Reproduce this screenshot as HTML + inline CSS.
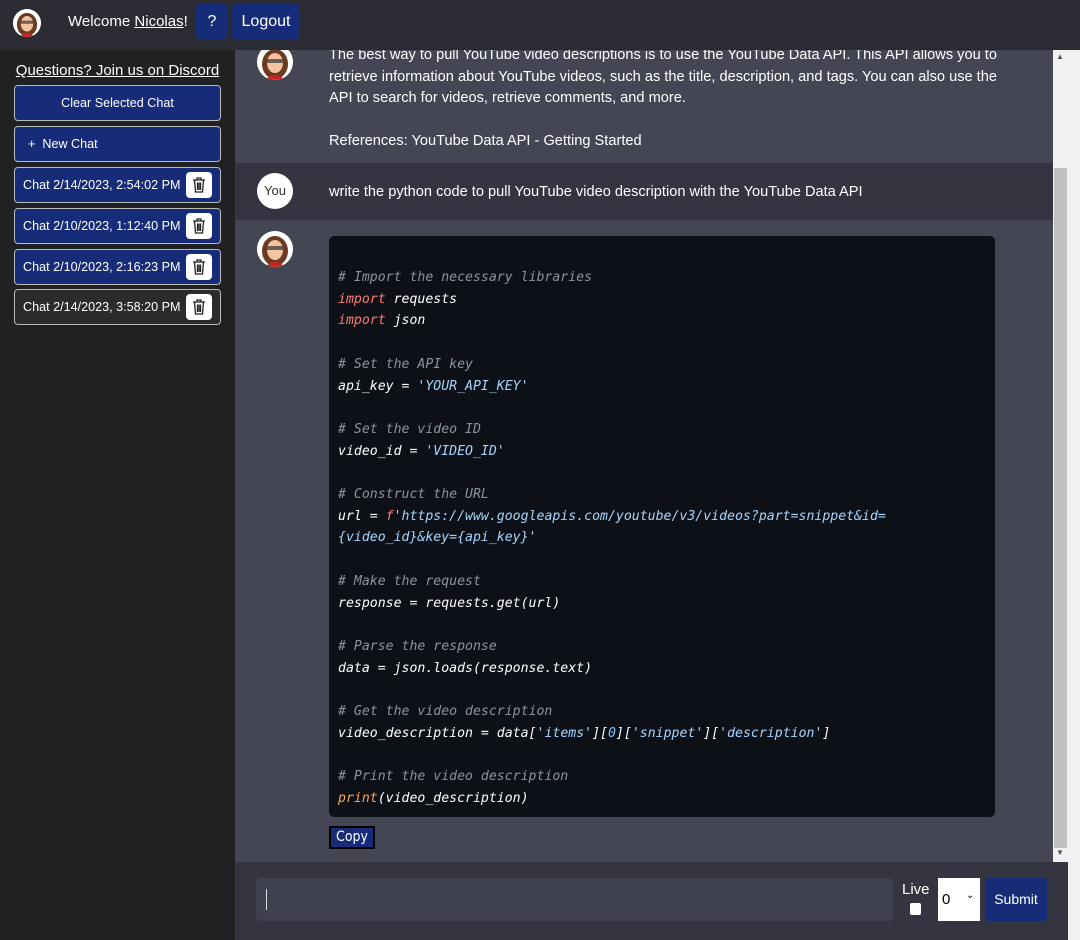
<!DOCTYPE html>
<html><head><style>
*{box-sizing:border-box;margin:0;padding:0}
body{width:1080px;height:940px;overflow:hidden;background:#343541;font-family:"Liberation Sans",sans-serif;color:#fff;position:relative}
.hdr{position:absolute;left:0;top:0;width:1080px;height:50px;background:#2a2b33}
.av{position:absolute;width:36px;height:36px;border-radius:50%;background:#fff;overflow:hidden}
.av svg{width:100%;height:100%}
.btn{position:absolute;background:#172c78;border-radius:4px;color:#fff;font-size:16px;text-align:center}
.side{position:absolute;left:0;top:50px;width:235px;height:890px;background:#202123}
.sb{position:absolute;left:14px;width:207px;height:36px;border:1px solid #bbb;border-radius:4px;background:#172c78;font-size:12.6px;line-height:34px;white-space:nowrap}
.tr{position:absolute;right:8px;top:4px;width:26px;height:26px;background:#fff;border-radius:4px}
.tr svg{position:absolute;left:6px;top:5px;width:14px;height:16px}
.main{position:absolute;left:235px;top:50px;width:818px;height:812px;background:#444654;overflow:hidden}
.code{position:absolute;left:94px;top:186px;width:666px;height:581px;background:#0d1117;border-radius:5px;font-family:"DejaVu Sans Mono",monospace;font-style:italic;font-size:13.2px;line-height:21.7px;padding:31px 0 0 9px;white-space:pre;color:#fff}
.c{color:#8b949e}.k{color:#ff7b72}.s{color:#a5d6ff}.f{color:#ffa657}.n{color:#79c0ff}
.p{font-size:14.6px;line-height:21.6px}
</style></head><body>
<div class="hdr">
 <div class="av" style="left:13px;top:9px;width:28px;height:28px"><svg viewBox="0 0 36 36"><circle cx="18" cy="18" r="18" fill="#fff"/><ellipse cx="18" cy="20" rx="13" ry="15" fill="#6b3a22"/><ellipse cx="18" cy="19" rx="8" ry="10" fill="#f3c3a2"/><rect x="10" y="15" width="16" height="4" fill="#333" opacity=".7"/><path d="M8 36 Q18 26 28 36Z" fill="#c22"/></svg></div>
 <div style="position:absolute;left:68px;top:13px;font-size:15px">Welcome <u>Nicolas</u>!</div>
 <div class="btn" style="left:196px;top:4px;width:32px;height:35px;line-height:35px">?</div>
 <div class="btn" style="left:232px;top:4px;width:68px;height:35px;line-height:35px">Logout</div>
</div>
<div class="side">
 <div style="position:absolute;left:0;width:235px;top:12px;text-align:center;font-size:15px;text-decoration:underline">Questions? Join us on Discord</div>
 <div class="sb" style="top:35px;text-align:center">Clear Selected Chat</div>
 <div class="sb" style="top:76px;padding-left:13px">+&nbsp; New Chat</div>
 <div class="sb" style="top:117px;padding-left:8px">Chat 2/14/2023, 2:54:02 PM<div class="tr"><svg viewBox="0 0 14 16"><path d="M1 3h12M5 3V1h4v2M2.5 3l1 12h7l1-12M5.5 5.5v7.5M7 5.5v7.5M8.5 5.5v7.5" stroke="#222" stroke-width="1.3" fill="none"/></svg></div></div>
 <div class="sb" style="top:158px;padding-left:8px">Chat 2/10/2023, 1:12:40 PM<div class="tr"><svg viewBox="0 0 14 16"><path d="M1 3h12M5 3V1h4v2M2.5 3l1 12h7l1-12M5.5 5.5v7.5M7 5.5v7.5M8.5 5.5v7.5" stroke="#222" stroke-width="1.3" fill="none"/></svg></div></div>
 <div class="sb" style="top:199px;padding-left:8px">Chat 2/10/2023, 2:16:23 PM<div class="tr"><svg viewBox="0 0 14 16"><path d="M1 3h12M5 3V1h4v2M2.5 3l1 12h7l1-12M5.5 5.5v7.5M7 5.5v7.5M8.5 5.5v7.5" stroke="#222" stroke-width="1.3" fill="none"/></svg></div></div>
 <div class="sb" style="top:239px;padding-left:8px;background:#2b2b2d">Chat 2/14/2023, 3:58:20 PM<div class="tr"><svg viewBox="0 0 14 16"><path d="M1 3h12M5 3V1h4v2M2.5 3l1 12h7l1-12M5.5 5.5v7.5M7 5.5v7.5M8.5 5.5v7.5" stroke="#222" stroke-width="1.3" fill="none"/></svg></div></div>
</div>
<div class="main">
 <div class="av" style="left:22px;top:-6px"><svg viewBox="0 0 36 36"><circle cx="18" cy="18" r="18" fill="#fff"/><ellipse cx="18" cy="20" rx="13" ry="15" fill="#6b3a22"/><ellipse cx="18" cy="19" rx="8" ry="10" fill="#f3c3a2"/><rect x="10" y="15" width="16" height="4" fill="#333" opacity=".7"/><path d="M8 36 Q18 26 28 36Z" fill="#c22"/></svg></div>
 <div class="p" style="position:absolute;left:94px;top:-5px;width:676px">The best way to pull YouTube video descriptions is to use the YouTube Data API. This API allows you to retrieve information about YouTube videos, such as the title, description, and tags. You can also use the API to search for videos, retrieve comments, and more.<br><br>References: YouTube Data API - Getting Started</div>
 <div style="position:absolute;left:0;top:113px;width:818px;height:57px;background:#343541">
  <div class="av" style="left:22px;top:10px;color:#333;font-size:13px;text-align:center;line-height:36px">You</div>
  <div class="p" style="position:absolute;left:94px;top:19px">write the python code to pull YouTube video description with the YouTube Data API</div>
 </div>
 <div class="av" style="left:22px;top:181px"><svg viewBox="0 0 36 36"><circle cx="18" cy="18" r="18" fill="#fff"/><ellipse cx="18" cy="20" rx="13" ry="15" fill="#6b3a22"/><ellipse cx="18" cy="19" rx="8" ry="10" fill="#f3c3a2"/><rect x="10" y="15" width="16" height="4" fill="#333" opacity=".7"/><path d="M8 36 Q18 26 28 36Z" fill="#c22"/></svg></div>
 <div class="code"><span class="c"># Import the necessary libraries</span>
<span class="k">import</span> requests
<span class="k">import</span> json

<span class="c"># Set the API key</span>
api_key = <span class="s">'YOUR_API_KEY'</span>

<span class="c"># Set the video ID</span>
video_id = <span class="s">'VIDEO_ID'</span>

<span class="c"># Construct the URL</span>
url = <span class="k">f</span><span class="s">'https://www.googleapis.com/youtube/v3/videos?part=snippet&amp;id=</span>
<span class="s">{video_id}&amp;key={api_key}'</span>

<span class="c"># Make the request</span>
response = requests.get(url)

<span class="c"># Parse the response</span>
data = json.loads(response.text)

<span class="c"># Get the video description</span>
video_description = data[<span class="s">'items'</span>][<span class="n">0</span>][<span class="s">'snippet'</span>][<span class="s">'description'</span>]

<span class="c"># Print the video description</span>
<span class="f">print</span>(video_description)</div>
 <div style="position:absolute;left:94px;top:776px;width:46px;height:23px;background:#172c78;border:2px solid #000;font-family:'DejaVu Sans Condensed','DejaVu Sans',sans-serif;font-size:14px;line-height:19px;text-align:center">Copy</div>
</div>
<div style="position:absolute;left:1053px;top:50px;width:27px;height:890px;background:#f1f1f1"></div>
<div style="position:absolute;left:1054px;top:168px;width:13px;height:680px;background:#c1c1c1"></div>
<div style="position:absolute;left:1056px;top:52px;font-size:8px;color:#555">▲</div>
<div style="position:absolute;left:1056px;top:848px;font-size:8px;color:#555">▼</div>
<div style="position:absolute;left:1053px;top:862px;width:15px;height:78px;background:#343541"></div>
<div style="position:absolute;left:256px;top:878px;width:637px;height:43px;background:#40414f;border-radius:5px"><div style="position:absolute;left:10px;top:11px;width:1px;height:21px;background:#ddd"></div></div>
<div style="position:absolute;left:902px;top:881px;font-size:15px">Live</div>
<div style="position:absolute;left:910px;top:903px;width:11px;height:12px;background:#fff;border-radius:2px"></div>
<div style="position:absolute;left:938px;top:878px;width:42px;height:43px;background:#fff;color:#000;font-size:15px;padding:13px 0 0 4px">0<span style="position:absolute;left:28px;top:12px;font-size:10px">⌄</span></div>
<div class="btn" style="left:985px;top:878px;width:62px;height:43px;line-height:43px;font-size:14px">Submit</div>
</body></html>
